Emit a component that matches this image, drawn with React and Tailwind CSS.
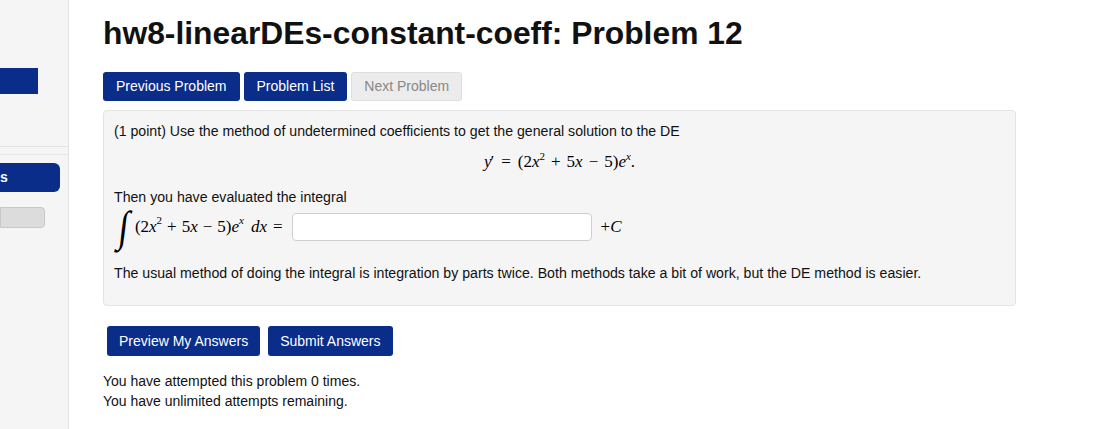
import React from 'react';

const sans = { fontFamily: '"Liberation Sans", Arial, sans-serif' };

function V({ children }) {
  return <i className="italic">{children}</i>;
}

function Equation() {
  return (
    <span className="font-['Liberation_Serif',serif] text-[17px] text-black">
      <V>y</V><span className="-ml-[1px]">&prime;</span>
      <span className="mx-[7px]">=</span>
      (2<V>x</V><sup className="text-[11px] -top-[7px]">2</sup>
      <span className="mx-[6px]">+</span>5<V>x</V>
      <span className="mx-[6px]">&minus;</span>5)<V>e</V><sup className="text-[11px] -top-[7px]"><V>x</V></sup>.
    </span>
  );
}

function Integral() {
  return (
    <span className="flex items-center font-['Liberation_Serif',serif] text-[17px] text-black">
      <span className="ml-[5px] mr-[6px] inline-block -skew-x-[8deg] scale-y-[1.2] text-[36px] leading-none italic">&int;</span>
      (2<V>x</V><sup className="text-[11px] -top-[7px]">2</sup>
      <span className="mx-[5px]">+</span>5<V>x</V>
      <span className="mx-[5px]">&minus;</span>5)<V>e</V><sup className="text-[11px] -top-[7px]"><V>x</V></sup>
      <span className="ml-[7px]"><V>dx</V></span>
      <span className="ml-[6px] mr-[9px]">=</span>
    </span>
  );
}

export default function App() {
  return (
    <div className="flex h-[429px] w-[1094px] overflow-hidden bg-white" style={sans}>
      {/* sidebar */}
      <div className="w-[69px] shrink-0 bg-[#f5f5f5] border-r border-[#e3e3e3]">
        <div className="h-[147px] border-b border-[#e3e3e3] pt-[68px]">
          <div className="h-[26px] w-[38px] bg-[#0a2d8a]"></div>
        </div>
        <div className="mt-[7px] border-t border-[#e8e8e8] pt-[8px]">
          <div className="flex h-[29px] w-[60px] items-center rounded-r-[6px] bg-[#0a2d8a] text-[14px] font-bold text-white">s</div>
          <div className="mt-[15px] h-[21px] w-[45px] rounded-r-[4px] border border-[#c8c8c8] bg-[#dcdcdc]"></div>
        </div>
      </div>

      {/* main */}
      <div className="flex-1 pl-[34px] pt-[15px]">
        <h1 className="text-[31.8px] font-bold leading-[36px] text-[#111]">hw8-linearDEs-constant-coeff: Problem 12</h1>

        <div className="mt-[21px] flex gap-[4px] text-[14px]">
          <button className="h-[29px] rounded-[3px] bg-[#0a2d8a] px-[13px] text-white">Previous Problem</button>
          <button className="h-[29px] rounded-[3px] bg-[#0a2d8a] px-[13px] text-white">Problem List</button>
          <button className="h-[29px] rounded-[3px] border border-[#dedede] bg-[#ececec] px-[12px] text-[#888]">Next Problem</button>
        </div>

        <div className="mt-[9px] w-[913px] rounded-[4px] border border-[#e3e3e3] bg-[#f5f5f5] px-[10px] pt-[10px] pb-[22px] text-[14.15px] text-[#111]">
          <p className="leading-[20px]">(1 point) Use the method of undetermined coefficients to get the general solution to the DE</p>
          <div className="mt-[10px] text-center leading-[22px]"><Equation /></div>
          <p className="mt-[14px] leading-[20px]">Then you have evaluated the integral</p>
          <div className="mt-[4px] flex h-[32px] items-center">
            <Integral />
            <input className="h-[28px] w-[300px] rounded-[4px] border border-[#cfcfcf] bg-white px-2" />
            <span className="ml-[9px] font-['Liberation_Serif',serif] text-[17px] text-black">+<V>C</V></span>
          </div>
          <p className="mt-[20px] leading-[20px]">The usual method of doing the integral is integration by parts twice. Both methods take a bit of work, but the DE method is easier.</p>
        </div>

        <div className="mt-[20px] flex gap-[8px] pl-[4px] text-[14px]">
          <button className="h-[30px] rounded-[3px] bg-[#0a2d8a] px-[12px] text-white">Preview My Answers</button>
          <button className="h-[30px] rounded-[3px] bg-[#0a2d8a] px-[12px] text-white">Submit Answers</button>
        </div>

        <div className="mt-[15px] text-[14px] leading-[20px] text-[#111]">
          <p>You have attempted this problem 0 times.</p>
          <p>You have unlimited attempts remaining.</p>
        </div>
      </div>
    </div>
  );
}
